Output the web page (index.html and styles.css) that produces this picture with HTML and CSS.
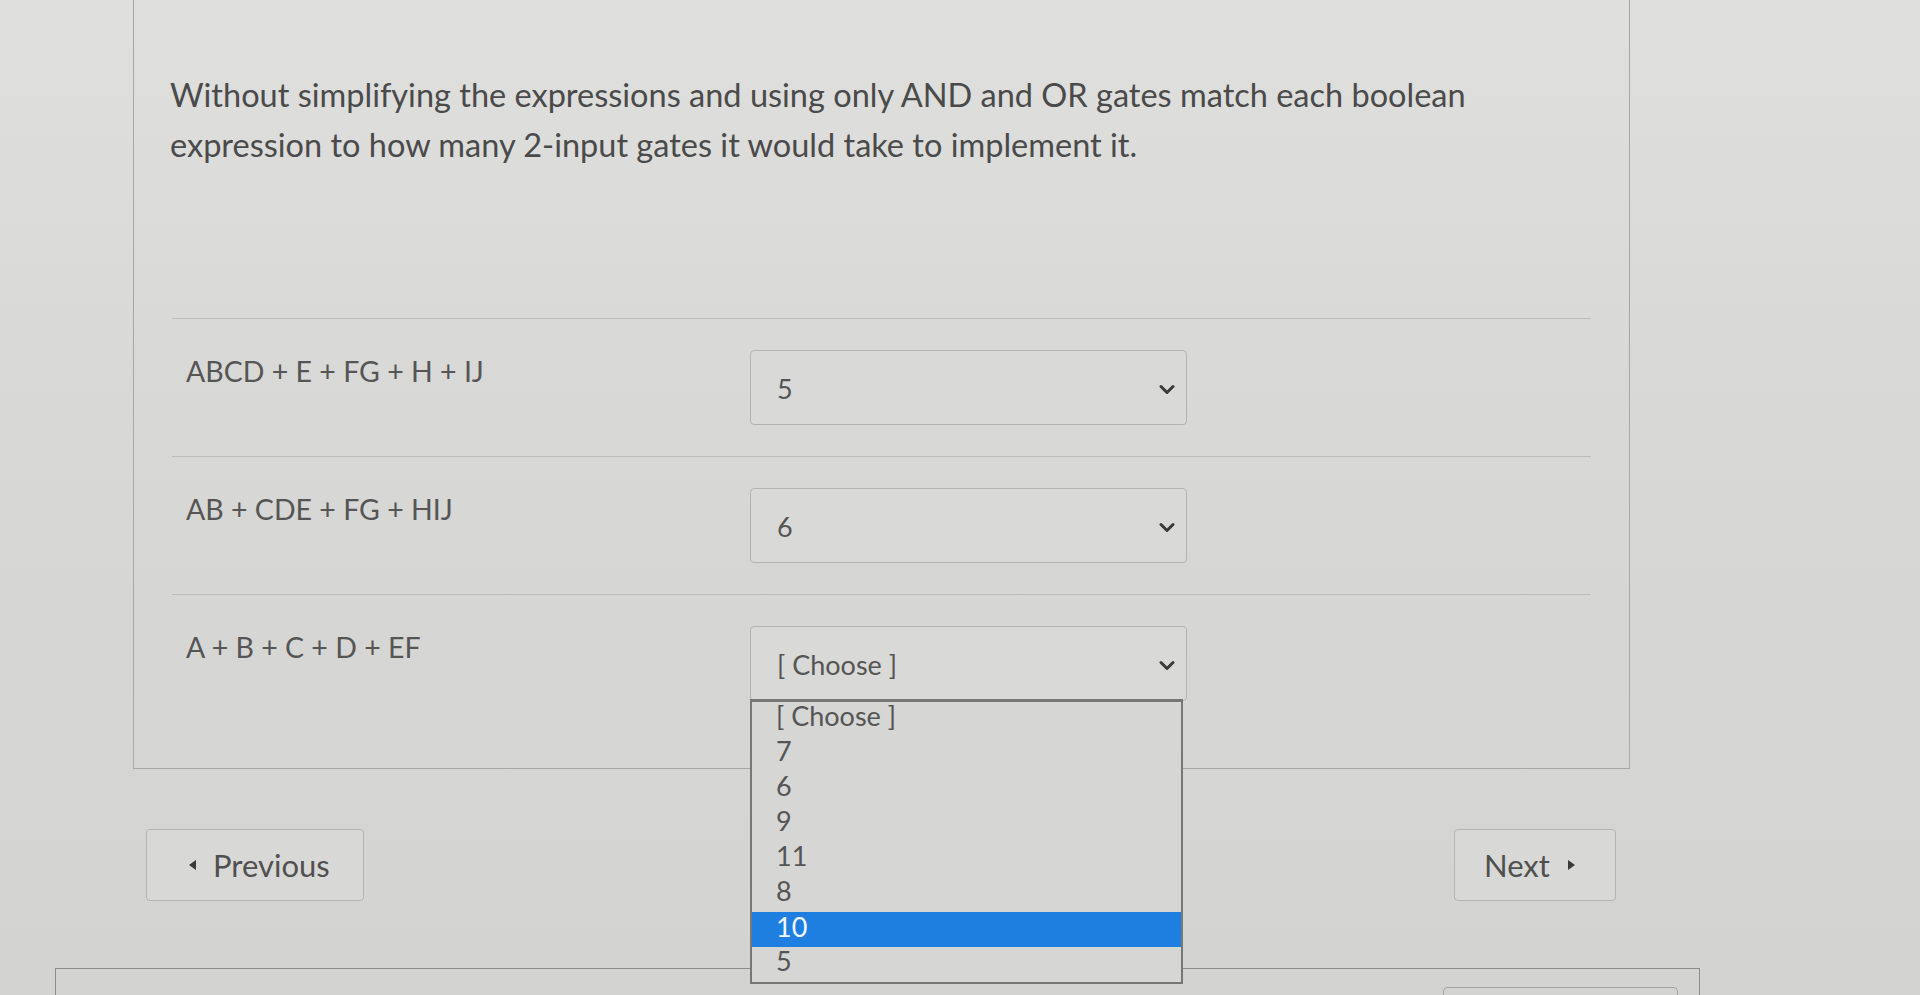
FILE: index.html
```html
<!DOCTYPE html>
<html lang="en">
<head>
<meta charset="utf-8">
<title>Quiz question</title>
<link rel="stylesheet" href="styles.css">
</head>
<body>
<div class="page">
  <div class="question">
    <div class="qtext">Without simplifying the expressions and using only AND and OR gates match each boolean<br>expression to how many 2-input gates it would take to implement it.</div>
    <div class="answers">
      <div class="row">
        <div class="label">ABCD + E + FG + H + IJ</div>
        <div class="select-wrap">
          <div class="select"><span class="value">5</span>
            <svg class="chev" viewBox="0 0 16 11" width="16" height="11"><path d="M2 2.5 L8 8.5 L14 2.5" fill="none" stroke="#3a3a3a" stroke-width="3" stroke-linecap="round" stroke-linejoin="round"/></svg>
          </div>
        </div>
      </div>
      <div class="row">
        <div class="label">AB + CDE + FG + HIJ</div>
        <div class="select-wrap">
          <div class="select"><span class="value">6</span>
            <svg class="chev" viewBox="0 0 16 11" width="16" height="11"><path d="M2 2.5 L8 8.5 L14 2.5" fill="none" stroke="#3a3a3a" stroke-width="3" stroke-linecap="round" stroke-linejoin="round"/></svg>
          </div>
        </div>
      </div>
      <div class="row last">
        <div class="label">A + B + C + D + EF</div>
        <div class="select-wrap">
          <div class="select"><span class="value">[ Choose ]</span>
            <svg class="chev" viewBox="0 0 16 11" width="16" height="11"><path d="M2 2.5 L8 8.5 L14 2.5" fill="none" stroke="#3a3a3a" stroke-width="3" stroke-linecap="round" stroke-linejoin="round"/></svg>
          </div>
          <ul class="dropdown">
            <li>[ Choose ]</li>
            <li>7</li>
            <li>6</li>
            <li>9</li>
            <li>11</li>
            <li>8</li>
            <li class="active">10</li>
            <li>5</li>
          </ul>
        </div>
      </div>
    </div>
  </div>
  <div class="nav">
    <div class="btn prev"><span class="tri tri-left"></span>Previous</div>
    <div class="btn next">Next<span class="tri tri-right"></span></div>
  </div>
  <div class="bottom-box">
    <div class="bottom-btn"></div>
  </div>
</div>
</body>
</html>
```

FILE: styles.css
```css
html, body {
  margin: 0;
  padding: 0;
}
body {
  width: 1920px;
  height: 995px;
  overflow: hidden;
  font-family: Lato, "Open Sans", "Liberation Sans", sans-serif;
  color: #4e4e4e;
  background: linear-gradient(180deg, #dfdfdd 0%, #d8d8d6 40%, #d3d3d1 100%);
}
.page {
  width: 1920px;
}
.question {
  margin-left: 133px;
  width: 1495px;
  border: 1px solid #a8a8a6;
  border-top: 0;
  padding-top: 70px;
}
.qtext {
  padding-left: 36px;
  font-size: 32.5px;
  line-height: 50px;
  color: #4a4a4a;
}
.answers {
  margin: 148px 38px 36px 38px;
}
.row {
  display: flex;
  align-items: flex-start;
  border-top: 1px solid #bcbcba;
  padding: 31px 0 31px 14px;
}
.label {
  width: 564px;
  flex: none;
  font-size: 28.5px;
  line-height: 32px;
  padding-top: 5px;
  color: #555;
}
.select-wrap {
  position: relative;
  width: 437px;
}
.select {
  box-sizing: border-box;
  height: 75px;
  display: flex;
  align-items: center;
  justify-content: space-between;
  padding: 0 11px 0 26px;
  border: 1px solid #b3b3b1;
  border-radius: 4px;
  background: #d9d9d7;
  font-size: 27px;
  color: #555;
}
.value {
  padding-top: 2px;
}
.chev {
  flex: none;
  margin-top: 3px;
}
.dropdown {
  position: absolute;
  left: 0;
  top: calc(100% - 2px);
  width: 433px;
  box-sizing: border-box;
  margin: 0;
  padding: 0;
  list-style: none;
  border: 2px solid #777775;
  border-top-width: 3px;
  background: #d6d6d4;
  z-index: 5;
}
.dropdown li {
  height: 35px;
  line-height: 27px;
  padding-left: 24px;
  font-size: 27px;
  color: #555;
}
.dropdown li.active {
  background: #1f7fe0;
  color: #f4f8ff;
  line-height: 30px;
}
.nav {
  margin-left: 133px;
  width: 1497px;
  box-sizing: border-box;
  padding: 0 14px 0 13px;
  margin-top: 60px;
  display: flex;
  justify-content: space-between;
}
.btn {
  box-sizing: border-box;
  height: 72px;
  display: flex;
  align-items: center;
  border: 1px solid #b4b4b2;
  border-radius: 4px;
  background: #d8d8d6;
  font-size: 31px;
  color: #505050;
}
.prev {
  width: 218px;
  padding-left: 42px;
}
.next {
  width: 162px;
  padding-left: 29px;
}
.tri {
  display: inline-block;
  width: 0;
  height: 0;
  border-top: 5px solid transparent;
  border-bottom: 5px solid transparent;
}
.tri-left {
  border-right: 7px solid #3a3a3a;
  margin-right: 17px;
}
.tri-right {
  border-left: 7px solid #3a3a3a;
  margin-left: 18px;
}
.bottom-box {
  margin-top: 67px;
  margin-left: 55px;
  width: 1645px;
  height: 60px;
  box-sizing: border-box;
  border: 1px solid #8c8c8a;
  border-bottom: 0;
  display: flex;
  justify-content: flex-end;
  padding: 18px 21px 0 0;
}
.bottom-btn {
  width: 233px;
  height: 40px;
  border: 1px solid #a4a4a2;
  border-bottom: 0;
  border-radius: 5px 5px 0 0;
}
```
